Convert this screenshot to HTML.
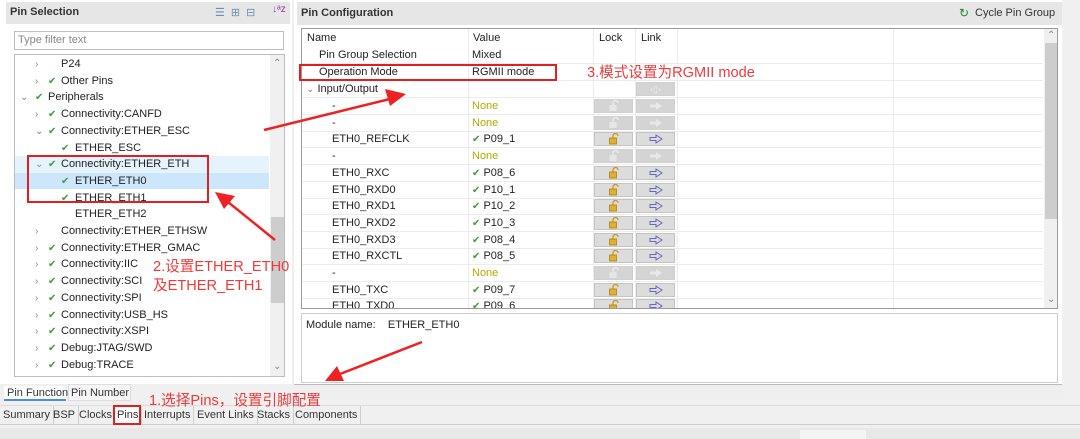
<!DOCTYPE html>
<html><head><meta charset="utf-8">
<style>
*{margin:0;padding:0;box-sizing:border-box}
body{width:1080px;height:439px;overflow:hidden;background:#f0f0f0;font-family:"Liberation Sans","Noto Sans CJK SC",sans-serif;font-size:11px;color:#222;position:relative}
.a{position:absolute;white-space:nowrap}
.hdr{background:#e6e6e6}
.b{font-weight:bold;color:#333}
.chk{color:#3aa03a;font-size:10px}
.chev{color:#888;font-size:10px}
.red{color:#f03a3a;font-size:14.6px;font-family:"Liberation Sans","Noto Sans CJK SC",sans-serif}
.row{position:absolute;left:0;right:0;height:17px;border-bottom:1px solid #ececec}
.btn{position:absolute;top:1px;height:14px;background:#dcdcdc;border:1px solid #c4c4c4}
.dis{background:#d4d4d4;border-color:#d0d0d0}
.tab{position:absolute;top:0;height:19px;line-height:18px;padding:0 3px;border-right:1px solid #cfcfcf;font-size:11px;color:#333}
.tr{position:absolute;height:17px;line-height:17px}
</style></head><body>
<div class="a" style="left:0;top:0;width:292px;height:384px;background:#fff"></div>
<div class="a hdr" style="left:6px;top:2px;width:284px;height:22px"></div>
<div class="a b" style="left:10px;top:6px;font-size:11px">Pin Selection</div>
<div class="a" style="left:215px;top:6px;color:#6a8fb5;font-size:11px;letter-spacing:6px">☰⊞⊟</div>
<div class="a" style="left:272px;top:4px;color:#6a5fb5;font-size:10px">↓<span style="color:#a030a0">ᵃz</span></div>
<div class="a" style="left:14px;top:31px;width:270px;height:19px;border:1px solid #bdbdbd;background:#fff"></div>
<div class="a" style="left:18px;top:34px;color:#888">Type filter text</div>
<div class="a" style="left:14px;top:54px;width:271px;height:323px;border:1px solid #bdbdbd;background:#fff;overflow:hidden">
 <div class="a" style="left:0;top:101px;width:254px;height:17px;background:#e5f3fd"></div>
 <div class="a" style="left:0;top:118px;width:254px;height:16px;background:#cce6fb"></div>
 <div class="a" style="left:255px;top:0;width:15px;height:322px;background:#f0f0f0"></div>
 <div class="a" style="left:256px;top:162px;width:13px;height:86px;background:#cdcdcd"></div>
 <div class="a chev" style="left:258px;top:3px">⌃</div>
 <div class="a chev" style="left:258px;top:306px">⌄</div>
</div>
<div class="a" id="tree" style="left:0;top:55px;width:268px;height:321px;overflow:hidden"></div>
<script>
var T=[[2,">",0,"P24"],[2,">",1,"Other Pins"],[1,"v",1,"Peripherals"],[2,">",1,"Connectivity:CANFD"],[2,"v",1,"Connectivity:ETHER_ESC"],[3,"",1,"ETHER_ESC"],[2,"v",1,"Connectivity:ETHER_ETH"],[3,"",1,"ETHER_ETH0"],[3,"",1,"ETHER_ETH1"],[3,"",0,"ETHER_ETH2"],[2,">",0,"Connectivity:ETHER_ETHSW"],[2,">",1,"Connectivity:ETHER_GMAC"],[2,">",1,"Connectivity:IIC"],[2,">",1,"Connectivity:SCI"],[2,">",1,"Connectivity:SPI"],[2,">",1,"Connectivity:USB_HS"],[2,">",1,"Connectivity:XSPI"],[2,">",1,"Debug:JTAG/SWD"],[2,">",1,"Debug:TRACE"],[2,">",1,"Debug:..."]];
var P={1:[22,37,48],2:[37,50,61],3:[0,63,75]},h="";
T.forEach(function(r,i){var t=i*16.7+1,p=P[r[0]];
if(r[1])h+='<div class="tr chev" style="left:'+(p[0]-2)+'px;top:'+t+'px">'+(r[1]==">"?"›":"⌄")+'</div>';
if(r[2])h+='<div class="tr chk" style="left:'+(p[1]-2)+'px;top:'+t+'px">✔</div>';
h+='<div class="tr" style="left:'+p[2]+'px;top:'+t+'px;color:#222">'+r[3]+'</div>';});
document.getElementById("tree").innerHTML=h;
</script>
<div class="a" style="left:0;top:384px;width:292px;height:17px;background:#f0f0f0"></div>
<div class="a" style="left:4px;top:386px;width:62px;height:15px;background:#fff;border-bottom:2px solid #4a90d9"></div>
<div class="a" style="left:7px;top:387px;color:#333">Pin Function</div>
<div class="a" style="left:68px;top:384px;width:63px;height:17px;background:#f5f5f5;border:1px solid #ddd"></div>
<div class="a" style="left:71px;top:387px;color:#333">Pin Number</div>

<div class="a" style="left:294px;top:0;width:768px;height:400px;background:#fff"></div>
<div class="a hdr" style="left:297px;top:2px;width:765px;height:23px"></div>
<div class="a b" style="left:301px;top:7px">Pin Configuration</div>
<div class="a" style="left:959px;top:6px;color:#1a8a2a;font-size:12px">↻</div>
<div class="a" style="left:975px;top:7px;color:#333">Cycle Pin Group</div>
<div class="a" style="left:301px;top:28px;width:757px;height:281px;border:1px solid #9a9a9a;background:#fff;overflow:hidden">
 <div class="a" style="left:166px;top:0;width:1px;height:280px;background:#ececec"></div>
 <div class="a" style="left:291px;top:0;width:1px;height:280px;background:#ececec"></div>
 <div class="a" style="left:333px;top:0;width:1px;height:280px;background:#ececec"></div>
 <div class="a" style="left:375px;top:0;width:1px;height:280px;background:#ececec"></div>
 <div class="a" style="left:591px;top:0;width:1px;height:280px;background:#ececec"></div>
 <div class="a" style="left:742px;top:0;width:14px;height:280px;background:#f0f0f0"></div>
 <div class="a" style="left:743px;top:14px;width:12px;height:176px;background:#cdcdcd"></div>
 <div class="a chev" style="left:745px;top:1px">⌃</div>
 <div class="a chev" style="left:745px;top:265px">⌄</div>
 <div class="a" style="left:5px;top:3px">Name</div>
 <div class="a" style="left:171px;top:3px">Value</div>
 <div class="a" style="left:297px;top:3px">Lock</div>
 <div class="a" style="left:339px;top:3px">Link</div>
</div>
<div class="a" style="left:302px;top:47px;width:741px;height:261px;overflow:hidden">
 <div class="row" style="top:0"><span class="a" style="left:17px;top:2px">Pin Group Selection</span><span class="a" style="left:170px;top:2px">Mixed</span></div>
 <div class="row" style="top:17px"><span class="a" style="left:17px;top:2px">Operation Mode</span><span class="a" style="left:170px;top:2px">RGMII mode</span></div>
 <div class="row" style="top:34px"><span class="a" style="left:4px;top:2px"><span class="chev">⌄</span> Input/Output</span><div class="btn dis" style="left:334px;width:39px;color:#eee;font-size:9px;text-align:center;line-height:12px">‹▯›</div></div>
</div>
<div class="a" style="left:302px;top:98px;width:741px;height:210px;overflow:hidden" id="rows"></div>
<script>
var d=[["-","None",0],["-","None",0],["ETH0_REFCLK","P09_1",1],["-","None",0],["ETH0_RXC","P08_6",1],["ETH0_RXD0","P10_1",1],["ETH0_RXD1","P10_2",1],["ETH0_RXD2","P10_3",1],["ETH0_RXD3","P08_4",1],["ETH0_RXCTL","P08_5",1],["-","None",0],["ETH0_TXC","P09_7",1],["ETH0_TXD0","P09_6",1]];
var h="";d.forEach(function(r,i){var t=i*16.7;
var lk=r[2]?'<svg width="12" height="12"><path d="M5 5V3a2.5 2.5 0 0 1 5 0" fill="none" stroke="#c89a20" stroke-width="1.3"/><rect x="1.5" y="5" width="7" height="6" fill="#e0b030" stroke="#b08010" stroke-width="0.8"/></svg>':'<svg width="12" height="12"><path d="M5 5V3a2.5 2.5 0 0 1 5 0" fill="none" stroke="#eee" stroke-width="1.2"/><rect x="1.5" y="5" width="7" height="6" fill="#e6e6e6"/></svg>';
var ar=r[2]?'<svg width="16" height="12"><path d="M2 4.5h6V2l6 4-6 4V7.5H2z" fill="#d8d8f0" stroke="#6a6aa8" stroke-width="1"/></svg>':'<svg width="16" height="12"><path d="M2 4.5h6V2l6 4-6 4V7.5H2z" fill="#e8e8e8"/></svg>';
h+='<div class="row" style="top:'+t+'px"><span class="a" style="left:30px;top:2px">'+r[0]+'</span>'+
(r[2]?'<span class="a" style="left:170px;top:2px"><span class="chk">✔</span> '+r[1]+'</span>':'<span class="a" style="left:170px;top:2px;color:#b8a800">'+r[1]+'</span>')+
'<div class="btn'+(r[2]?'':' dis')+'" style="left:292px;width:39px;text-align:center;line-height:10px">'+lk+'</div>'+
'<div class="btn'+(r[2]?'':' dis')+'" style="left:334px;width:39px;text-align:center;line-height:10px">'+ar+'</div></div>';});
document.getElementById("rows").innerHTML=h;
</script>
<div class="a" style="left:301px;top:313px;width:757px;height:70px;border:1px solid #cfcfcf;background:#fff"></div>
<div class="a" style="left:306px;top:319px">Module name:&nbsp;&nbsp;&nbsp;&nbsp;ETHER_ETH0</div>
<div class="a" style="left:294px;top:384px;width:768px;height:16px;background:#efefef;border-top:1px solid #bbb"></div>

<div class="a" style="left:0;top:405px;width:1080px;height:20px;background:#f0f0f0;border-top:1px solid #ddd;border-bottom:1px solid #ccc">
 <div class="tab" style="left:0">Summary</div>
 <div class="tab" style="left:50px">BSP</div>
 <div class="tab" style="left:76px">Clocks</div>
 <div class="tab" style="left:114px;background:#fff">Pins</div>
 <div class="tab" style="left:141px">Interrupts</div>
 <div class="tab" style="left:194px">Event Links</div>
 <div class="tab" style="left:254px">Stacks</div>
 <div class="tab" style="left:292px">Components</div>
</div>
<div class="a" style="left:0;top:428px;width:1080px;height:11px;background:#e8e8e8"></div>
<div class="a" style="left:800px;top:430px;width:66px;height:9px;background:#f4f4f4"></div>

<div class="a" style="left:299px;top:64px;width:258px;height:17px;border:2px solid #e02020"></div>
<div class="a" style="left:27px;top:155px;width:182px;height:48px;border:2px solid #e02020"></div>
<div class="a" style="left:113px;top:405px;width:28px;height:20px;border:2px solid #e02020"></div>
<div class="a red" style="left:587px;top:61px">3.模式设置为RGMII mode</div>
<div class="a red" style="left:153px;top:255px">2.设置ETHER_ETH0</div>
<div class="a red" style="left:153px;top:274px">及ETHER_ETH1</div>
<div class="a red" style="left:149px;top:389px">1.选择Pins，设置引脚配置</div>
<svg class="a" style="left:0;top:0" width="1080" height="439">
 <g stroke="#ee2222" stroke-width="2.5" fill="#ee2222">
  <line x1="264" y1="130" x2="390" y2="99"/>
  <polygon points="406,94 385,89 390,106" stroke="none"/>
  <line x1="275" y1="240" x2="228" y2="202"/>
  <polygon points="215,192 235,196 224,209" stroke="none"/>
  <line x1="422" y1="342" x2="340" y2="374"/>
  <polygon points="325,381 337,366 344,381" stroke="none"/>
 </g>
</svg>
</body></html>
